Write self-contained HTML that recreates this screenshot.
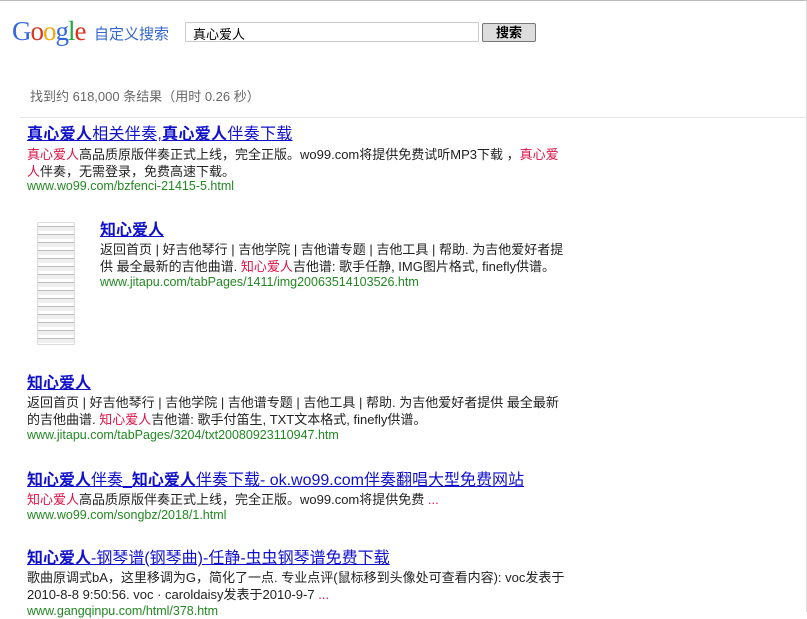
<!DOCTYPE html>
<html><head><meta charset="utf-8"><style>
body{margin:0;width:807px;height:612px;overflow:hidden;background:#fff;font-family:"Liberation Sans","Noto Sans CJK SC",sans-serif;position:relative}
.a{position:absolute;white-space:nowrap}
.t{font-size:16px;color:#1111cc;text-decoration:underline;line-height:18px}
.t b{font-weight:bold}
.s{font-size:13px;line-height:17px;color:#222}
.u{font-size:12.5px;color:#228822;line-height:15px}
.r{color:#dd1144}
</style></head><body>
<div style="position:absolute;left:0;top:0;width:807px;height:1px;background:#bbb"></div>
<div style="position:absolute;right:0;top:0;width:1px;height:612px;background:#ddd"></div>
<div class="a" style="left:12px;top:16px;font-family:'Liberation Serif',serif;font-size:27px;letter-spacing:-1px"><span style="color:#3366dd">G</span><span style="color:#dd3322">o</span><span style="color:#eeaa11">o</span><span style="color:#3366dd">g</span><span style="color:#22aa44">l</span><span style="color:#dd3322">e</span></div>
<div class="a" style="left:94px;top:23px;font-size:15px;color:#3366cc">自定义搜索</div>
<div style="position:absolute;left:185px;top:22px;width:292px;height:18px;border:1px solid #ccc"></div>
<div class="a" style="left:193px;top:24px;font-size:13px">真心爱人</div>
<div style="position:absolute;left:482px;top:23px;width:52px;height:17px;border:1px solid #777;background:#ddd;font-size:13px;font-weight:bold;text-align:center;line-height:17px;border-radius:2px">搜索</div>
<div class="a" style="left:30px;top:86px;font-size:13px;color:#666">找到约 618,000 条结果（用时 0.26 秒）</div>
<div style="position:absolute;left:20px;top:117px;width:787px;height:1px;background:#e5e5e5"></div>

<div class="a t" style="left:27px;top:126px;letter-spacing:0.3px"><b>真心爱人</b>相关伴奏,<b>真心爱人</b>伴奏下载</div>
<div class="a s" style="left:27px;top:146px"><span class="r">真心爱人</span>高品质原版伴奏正式上线，完全正版。wo99.com将提供免费试听MP3下载 ，<span class="r">真心爱</span><br><span class="r">人</span>伴奏，无需登录，免费高速下载。</div>
<div class="a u" style="left:27px;top:179px">www.wo99.com/bzfenci-21415-5.html</div>

<div style="position:absolute;left:37px;top:222px;width:36px;height:121px;border:1px solid #ddd;background:repeating-linear-gradient(#fff 0 3px,#bbb 3px 4px,#eee 4px 8px)"></div>
<div class="a t" style="left:100px;top:222px"><b>知心爱人</b></div>
<div class="a s" style="left:100px;top:241px">返回首页 | 好吉他琴行 | 吉他学院 | 吉他谱专题 | 吉他工具 | 帮助. 为吉他爱好者提<br>供 最全最新的吉他曲谱. <span class="r">知心爱人</span>吉他谱: 歌手任静, IMG图片格式, finefly供谱。</div>
<div class="a u" style="left:100px;top:275px">www.jitapu.com/tabPages/1411/img20063514103526.htm</div>

<div class="a t" style="left:27px;top:375px"><b>知心爱人</b></div>
<div class="a s" style="left:27px;top:394px">返回首页 | 好吉他琴行 | 吉他学院 | 吉他谱专题 | 吉他工具 | 帮助. 为吉他爱好者提供 最全最新<br>的吉他曲谱. <span class="r">知心爱人</span>吉他谱: 歌手付笛生, TXT文本格式, finefly供谱。</div>
<div class="a u" style="left:27px;top:428px">www.jitapu.com/tabPages/3204/txt20080923110947.htm</div>

<div class="a t" style="left:27px;top:472px"><b>知心爱人</b>伴奏_<b>知心爱人</b>伴奏下载- ok.wo99.com伴奏翻唱大型免费网站</div>
<div class="a s" style="left:27px;top:491px"><span class="r">知心爱人</span>高品质原版伴奏正式上线，完全正版。wo99.com将提供免费 <span class="r">...</span></div>
<div class="a u" style="left:27px;top:508px">www.wo99.com/songbz/2018/1.html</div>

<div class="a t" style="left:27px;top:550px"><b>知心爱人</b>-钢琴谱(钢琴曲)-任静-虫虫钢琴谱免费下载</div>
<div class="a s" style="left:27px;top:569px">歌曲原调式bA，这里移调为G，简化了一点. 专业点评(鼠标移到头像处可查看内容): voc发表于<br>2010-8-8 9:50:56. voc · caroldaisy发表于2010-9-7 <span class="r">...</span></div>
<div class="a u" style="left:27px;top:604px">www.gangqinpu.com/html/378.htm</div>
</body></html>
